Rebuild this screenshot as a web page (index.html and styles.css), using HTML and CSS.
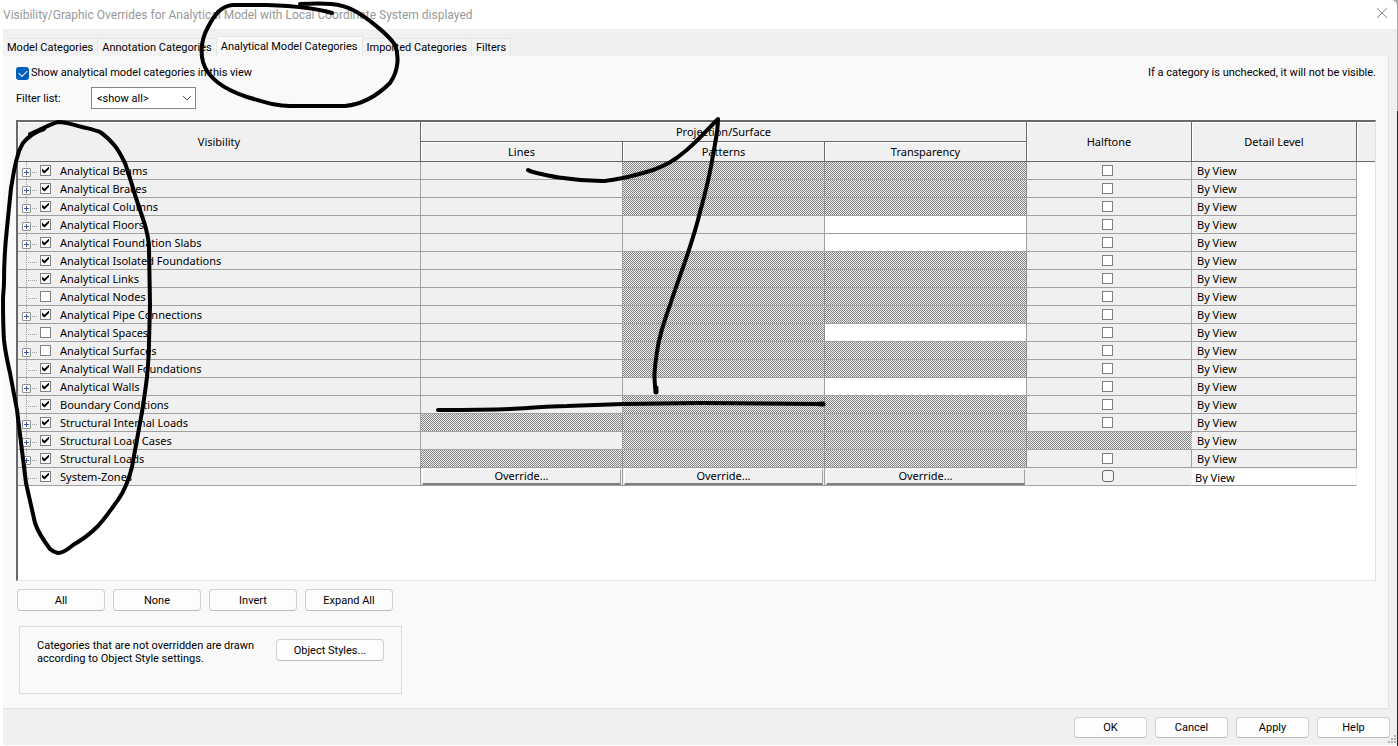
FILE: index.html
```
<!DOCTYPE html>
<html lang="en">
<head>
    <meta charset="UTF-8">
    <meta name="viewport" content="width=device-width, initial-scale=1.0">
    <title>Visibility/Graphic Overrides</title>
    <link rel="stylesheet" href="styles.css">
</head>
<body>
    <div class="dialog">
        <div class="titlebar">
            <span>Visibility/Graphic Overrides for Analytical Model with Local Coordinate System displayed</span>
            <button class="close" aria-label="Close">
                <svg width="12" height="12" viewBox="0 0 12 12"><path d="M1 1L11 11M11 1L1 11" stroke="#8a8a8a" fill="none"/></svg>
            </button>
        </div>

        <div class="tabs" role="tablist">
            <button class="tab" role="tab">Model Categories</button>
            <button class="tab" role="tab">Annotation Categories</button>
            <button class="tab active" role="tab" aria-selected="true">Analytical Model Categories</button>
            <button class="tab" role="tab">Imported Categories</button>
            <button class="tab" role="tab">Filters</button>
        </div>

        <div class="panel">
            <div class="show-row">
                <label class="show-all"><input type="checkbox" class="blue-check" checked>Show analytical model categories in this view</label>
                <span>If a category is unchecked, it will not be visible.</span>
            </div>
            <div class="filter-row">
                <label for="filter">Filter list:</label>
                <div class="select-box">
                    <select id="filter"><option>&lt;show all&gt;</option></select>
                    <svg width="10" height="6" viewBox="0 0 10 6"><path d="M1 1L5 5L9 1" stroke="#555" fill="none"/></svg>
                </div>
            </div>

            <div class="grid">
                <table>
                    <colgroup>
                        <col class="c-name"><col class="c-over"><col class="c-over"><col class="c-over"><col class="c-half"><col class="c-half"><col>
                    </colgroup>
                    <thead>
                        <tr>
                            <th rowspan="2">Visibility</th>
                            <th colspan="3">Projection/Surface</th>
                            <th rowspan="2">Halftone</th>
                            <th rowspan="2">Detail Level</th>
                            <th rowspan="2" class="last"></th>
                        </tr>
                        <tr><th>Lines</th><th>Patterns</th><th>Transparency</th></tr>
                    </thead>
                    <tbody>
                        <tr>
                            <td><div class="name"><span class="tree"><button class="plus" aria-label="Expand"></button></span><label><input type="checkbox" class="box" checked>Analytical Beams</label></div></td>
                            <td></td><td class="hatch"></td><td class="hatch"></td>
                            <td class="half"><input type="checkbox" class="box" aria-label="Halftone"></td><td class="level">By View</td>
                        </tr>
                        <tr>
                            <td><div class="name"><span class="tree"><button class="plus" aria-label="Expand"></button></span><label><input type="checkbox" class="box" checked>Analytical Braces</label></div></td>
                            <td></td><td class="hatch"></td><td class="hatch"></td>
                            <td class="half"><input type="checkbox" class="box" aria-label="Halftone"></td><td class="level">By View</td>
                        </tr>
                        <tr>
                            <td><div class="name"><span class="tree"><button class="plus" aria-label="Expand"></button></span><label><input type="checkbox" class="box" checked>Analytical Columns</label></div></td>
                            <td></td><td class="hatch"></td><td class="hatch"></td>
                            <td class="half"><input type="checkbox" class="box" aria-label="Halftone"></td><td class="level">By View</td>
                        </tr>
                        <tr>
                            <td><div class="name"><span class="tree"><button class="plus" aria-label="Expand"></button></span><label><input type="checkbox" class="box" checked>Analytical Floors</label></div></td>
                            <td></td><td></td><td class="edit"></td>
                            <td class="half"><input type="checkbox" class="box" aria-label="Halftone"></td><td class="level">By View</td>
                        </tr>
                        <tr>
                            <td><div class="name"><span class="tree"><button class="plus" aria-label="Expand"></button></span><label><input type="checkbox" class="box" checked>Analytical Foundation Slabs</label></div></td>
                            <td></td><td></td><td class="edit"></td>
                            <td class="half"><input type="checkbox" class="box" aria-label="Halftone"></td><td class="level">By View</td>
                        </tr>
                        <tr>
                            <td><div class="name"><span class="tree"></span><label><input type="checkbox" class="box" checked>Analytical Isolated Foundations</label></div></td>
                            <td></td><td class="hatch"></td><td class="hatch"></td>
                            <td class="half"><input type="checkbox" class="box" aria-label="Halftone"></td><td class="level">By View</td>
                        </tr>
                        <tr>
                            <td><div class="name"><span class="tree"></span><label><input type="checkbox" class="box" checked>Analytical Links</label></div></td>
                            <td></td><td class="hatch"></td><td class="hatch"></td>
                            <td class="half"><input type="checkbox" class="box" aria-label="Halftone"></td><td class="level">By View</td>
                        </tr>
                        <tr>
                            <td><div class="name"><span class="tree"></span><label><input type="checkbox" class="box">Analytical Nodes</label></div></td>
                            <td></td><td class="hatch"></td><td class="hatch"></td>
                            <td class="half"><input type="checkbox" class="box" aria-label="Halftone"></td><td class="level">By View</td>
                        </tr>
                        <tr>
                            <td><div class="name"><span class="tree"><button class="plus" aria-label="Expand"></button></span><label><input type="checkbox" class="box" checked>Analytical Pipe Connections</label></div></td>
                            <td></td><td class="hatch"></td><td class="hatch"></td>
                            <td class="half"><input type="checkbox" class="box" aria-label="Halftone"></td><td class="level">By View</td>
                        </tr>
                        <tr>
                            <td><div class="name"><span class="tree"></span><label><input type="checkbox" class="box">Analytical Spaces</label></div></td>
                            <td></td><td class="hatch"></td><td class="edit"></td>
                            <td class="half"><input type="checkbox" class="box" aria-label="Halftone"></td><td class="level">By View</td>
                        </tr>
                        <tr>
                            <td><div class="name"><span class="tree"><button class="plus" aria-label="Expand"></button></span><label><input type="checkbox" class="box">Analytical Surfaces</label></div></td>
                            <td></td><td class="hatch"></td><td class="hatch"></td>
                            <td class="half"><input type="checkbox" class="box" aria-label="Halftone"></td><td class="level">By View</td>
                        </tr>
                        <tr>
                            <td><div class="name"><span class="tree"></span><label><input type="checkbox" class="box" checked>Analytical Wall Foundations</label></div></td>
                            <td></td><td class="hatch"></td><td class="hatch"></td>
                            <td class="half"><input type="checkbox" class="box" aria-label="Halftone"></td><td class="level">By View</td>
                        </tr>
                        <tr>
                            <td><div class="name"><span class="tree"><button class="plus" aria-label="Expand"></button></span><label><input type="checkbox" class="box" checked>Analytical Walls</label></div></td>
                            <td></td><td></td><td class="edit"></td>
                            <td class="half"><input type="checkbox" class="box" aria-label="Halftone"></td><td class="level">By View</td>
                        </tr>
                        <tr>
                            <td><div class="name"><span class="tree"></span><label><input type="checkbox" class="box" checked>Boundary Conditions</label></div></td>
                            <td></td><td class="hatch"></td><td class="hatch"></td>
                            <td class="half"><input type="checkbox" class="box" aria-label="Halftone"></td><td class="level">By View</td>
                        </tr>
                        <tr>
                            <td><div class="name"><span class="tree"><button class="plus" aria-label="Expand"></button></span><label><input type="checkbox" class="box" checked>Structural Internal Loads</label></div></td>
                            <td class="hatch"></td><td class="hatch"></td><td class="hatch"></td>
                            <td class="half"><input type="checkbox" class="box" aria-label="Halftone"></td><td class="level">By View</td>
                        </tr>
                        <tr>
                            <td><div class="name"><span class="tree"><button class="plus" aria-label="Expand"></button></span><label><input type="checkbox" class="box" checked>Structural Load Cases</label></div></td>
                            <td></td><td class="hatch"></td><td class="hatch"></td>
                            <td class="hatch"></td><td class="level">By View</td>
                        </tr>
                        <tr>
                            <td><div class="name"><span class="tree"><button class="plus" aria-label="Expand"></button></span><label><input type="checkbox" class="box" checked>Structural Loads</label></div></td>
                            <td class="hatch"></td><td class="hatch"></td><td class="hatch"></td>
                            <td class="half"><input type="checkbox" class="box" aria-label="Halftone"></td><td class="level">By View</td>
                        </tr>
                        <tr class="current">
                            <td><div class="name"><span class="tree end"></span><label><input type="checkbox" class="box" checked>System-Zones</label></div></td>
                            <td><button class="override">Override...</button></td>
                            <td><button class="override">Override...</button></td>
                            <td><button class="override">Override...</button></td>
                            <td class="half"><input type="checkbox" class="box round" aria-label="Halftone"></td>
                            <td><select class="level-select" aria-label="Detail Level"><option>By View</option></select></td>
                        </tr>
                    </tbody>
                </table>
            </div>

            <div class="buttons">
                <button class="btn">All</button>
                <button class="btn">None</button>
                <button class="btn">Invert</button>
                <button class="btn">Expand All</button>
            </div>

            <div class="note">
                <p>Categories that are not overridden are drawn according to Object Style settings.</p>
                <button class="btn styles-btn">Object Styles...</button>
            </div>
        </div>

        <div class="footer">
            <button class="btn">OK</button>
            <button class="btn">Cancel</button>
            <button class="btn">Apply</button>
            <button class="btn">Help</button>
            <svg class="grip" width="10" height="10" viewBox="0 0 10 10" fill="#b0b0b0"><path d="M7 0h2v2h-2zM7 3h2v2h-2zM4 3h2v2h-2zM7 6h2v2h-2zM4 6h2v2h-2zM1 6h2v2h-2z"/></svg>
        </div>
    </div>

    <!-- pen marks drawn over the dialog -->
    <svg class="ink" width="1398" height="746" viewBox="0 0 1398 746">
        <path d="M332 13C316 8 295 6 267 5L233 5C221 6 215 14 208 27C202 38 200 50 203 62C207 76 220 88 247 97C265 102 275 106 290 106L345 106C365 104 380 93 390 83C399 70 399 55 395 45C388 34 365 16 353 10C340 3 325 3 300 4"/>
        <path d="M30 134C38 131 50 124 58 122C66 122 74 125 82 127C90 129 95 130 100 132C106 136 110 140 115 146C119 151 122 157 125 163C129 175 132 184 135 195L145 225C147 233 149 239 149 248L150 305L149 343C149 355 148 366 147 377C145 393 143 408 140 423L132 467C129 479 125 490 118 500C114 505 105 519 97 527C90 534 80 541 73 545C68 549 64 553 58 553C54 552 52 551 50 549C44 541 38 532 35 523L26 483L17 410L10 373C7 360 5 350 4 340C3 325 3 312 3 300C3 294 4 288 4 282C4 264 5 246 7 228L11 188C13 178 14 168 17 158C18 153 20 148 23 143C28 137 34 132 44 129"/>
        <path d="M528 170C531 172 534 172 537 173C546 175 554 177 563 178C576 180 589 181 602 181C609 181 616 179 623 178C633 176 643 173 653 170C664 166 674 161 683 153C694 145 705 132 718 119C718 132 715 143 713 155C710 175 705 194 700 212C692 246 678 280 670 305C663 324 659 337 657 352C655 365 653 378 656 392" />
        <path d="M438 410C462 410 486 410 510 409C530 408 548 406 567 406L623 404L700 403L823 404"/>
        <path class="thick" d="M656 388L656 392M820 404L823 404"/>
    </svg>
</body>
</html>
```
FILE: styles.css
```
* {
    box-sizing: border-box;
}

body {
    margin: 0;
    min-height: 100vh;
    display: flex;
    background: linear-gradient(#a8a8a8 0 111px, #222 111px);
    font: 11px/14px Roboto, Tahoma, sans-serif;
    color: #000;
}

button, select, input {
    font: inherit;
    color: inherit;
    margin: 0;
}

.dialog {
    flex: 1;
    display: flex;
    flex-direction: column;
    margin-right: 1px;
    border: solid #fff;
    border-width: 0 0 1px 3px;
    background: #f0f0f0;
    border-top-right-radius: 6px;
}

.titlebar {
    display: flex;
    justify-content: space-between;
    align-items: center;
    height: 29px;
    padding-right: 9px;
    background: #fff;
    border-top-right-radius: 6px;
    font-size: 12px;
    color: #999;
}

.close {
    display: flex;
    padding: 0;
    margin-bottom: 4px;
    border: none;
    background: none;
}

/* tabs */
.tabs {
    display: flex;
    align-items: flex-end;
    height: 27px;
}

.tab {
    height: 18px;
    padding: 1px 4px 0;
    border: 1px solid #e5e5e5;
    border-width: 1px 1px 0 0;
    background: #f3f3f3;
    white-space: nowrap;
}

.tab.active {
    height: 20px;
    padding-top: 0;
    background: #f9f9f9;
}

.panel {
    flex: 1;
    margin-right: 8px;
    padding: 10px 12px 0 13px;
    border: solid #e3e3e3;
    border-width: 0 1px 1px 0;
    background: #f9f9f9;
}

.show-row {
    display: flex;
    justify-content: space-between;
}

.show-all {
    display: flex;
    align-items: center;
    gap: 2px;
}

.blue-check {
    appearance: none;
    width: 13px;
    height: 13px;
    border-radius: 3px;
    background: #005fb8;
    display: grid;
    place-items: center;
}

.blue-check:checked::after {
    content: "";
    width: 7px;
    height: 4px;
    margin-bottom: 2px;
    border: solid #fff;
    border-width: 0 0 1px 1px;
    transform: rotate(-45deg);
}

.filter-row {
    display: flex;
    align-items: center;
    margin: 7px 0 11px;
}

.filter-row label {
    width: 75px;
    padding-top: 1px;
}

.select-box {
    display: grid;
    align-items: center;
    width: 105px;
}

.select-box > * {
    grid-area: 1 / 1;
}

.select-box select {
    appearance: none;
    height: 22px;
    padding: 1px 5px 0;
    border: 1px solid #868686;
    background: #fff;
}

.select-box svg {
    justify-self: end;
    margin-right: 4px;
    pointer-events: none;
}

/* category grid */
.grid {
    height: 461px;
    border: 2px solid #696969;
    border-color: #696969 #e3e3e3 #e3e3e3 #696969;
    border-right-width: 1px;
    border-bottom-width: 1px;
    background: #fff;
    font-family: "Noto Sans", Tahoma, sans-serif;
}

table {
    width: 100%;
    table-layout: fixed;
    border-collapse: separate;
    border-spacing: 0;
}

.c-name {
    width: 403px;
}

.c-over {
    width: 202px;
}

.c-half {
    width: 165px;
}

th {
    height: 20px;
    padding: 0;
    border: solid #696969;
    border-width: 0 1px 1px 0;
    background: #f0f0f0;
    box-shadow: inset 1px 1px #fff;
    font-weight: normal;
    line-height: 17px;
}

th.last {
    border-right: none;
}

td {
    height: 18px;
    padding: 0;
    border: solid #a0a0a0;
    border-width: 0 1px 1px 0;
    background: #f0f0f0;
    line-height: 17px;
}

.hatch {
    background: repeating-conic-gradient(#808080 0 25%, #f0f0f0 0 50%) 0 0 / 2px 2px;
    border-right: 1px dotted #a0a0a0;
}

.edit {
    background: #fff;
}

.name, .name label {
    display: flex;
    align-items: center;
}

.name {
    padding-left: 4px;
    height: 17px;
}

.name label {
    gap: 9px;
}

.name .box {
    margin-bottom: 1px;
}

/* dotted tree lines */
.tree {
    display: flex;
    align-items: flex-end;
    width: 18px;
    height: 17px;
    padding-bottom: 2px;
    background:
        repeating-linear-gradient(#a0a0a0 0 1px, transparent 1px 2px) 4px 0 / 1px 100% no-repeat,
        repeating-linear-gradient(90deg, #a0a0a0 0 1px, transparent 1px 2px) 4px 10px / 12px 1px no-repeat;
}

.tree.end {
    background-size: 1px 11px, 12px 1px;
}

.plus {
    width: 9px;
    height: 9px;
    padding: 0;
    border: 1px solid #919191;
    border-radius: 1px;
    background:
        linear-gradient(#3a5aa0, #3a5aa0) center / 5px 1px no-repeat,
        linear-gradient(#3a5aa0, #3a5aa0) center / 1px 5px no-repeat,
        #fcfcfc;
}

.box {
    appearance: none;
    width: 11px;
    height: 11px;
    border: 1px solid #808080;
    background: #fff;
    display: grid;
    place-items: center;
}

.box:checked::after {
    content: "";
    width: 7px;
    height: 7px;
    background: #000;
    clip-path: polygon(0 30%, 35% 60%, 100% 0, 100% 35%, 35% 100%, 0 70%);
}

.half .box {
    margin: 0 auto 1px 75px;
}

.box.round {
    width: 12px;
    height: 12px;
    border-radius: 3px;
    border-color: #666;
    background: #f5f5f5;
}

.level {
    padding-left: 5px;
}

.current td:nth-child(n+4) {
    border-right-color: #f0f0f0;
}

.override {
    display: block;
    width: 199px;
    height: 16px;
    margin: 0 auto;
    padding: 0 0 1px;
    border: 1px solid #fff;
    border-right-color: #a0a0a0;
    border-bottom: 2px solid #808080;
    background: #f0f0f0;
    line-height: 12px;
}

.level-select {
    appearance: none;
    display: block;
    width: 100%;
    height: 16px;
    padding: 0 3px 1px;
    border: none;
    background: #fff;
}

/* buttons */
.btn {
    width: 88px;
    height: 22px;
    padding: 1px 0 0;
    border: 1px solid #d0d0d0;
    border-bottom-color: #bcbcbc;
    border-radius: 4px;
    background: #fdfdfd;
}

.buttons {
    display: flex;
    gap: 8px;
    margin: 8px 0 15px 1px;
}

.note {
    display: flex;
    align-items: flex-start;
    justify-content: space-between;
    width: 383px;
    height: 68px;
    margin-left: 3px;
    padding: 12px 17px;
    border: 1px solid #dcdcdc;
}

.note p {
    width: 230px;
    margin: 0;
    line-height: 13px;
}

.btn.styles-btn {
    width: 108px;
}

.footer {
    display: flex;
    justify-content: flex-end;
    gap: 8px;
    position: relative;
    height: 36px;
    padding: 8px 7px 0 0;
}

.footer .btn {
    width: 73px;
    height: 21px;
}

.grip {
    position: absolute;
    right: 0;
    bottom: 0;
}

.ink {
    position: absolute;
    left: 0;
    top: 0;
    pointer-events: none;
    fill: none;
    stroke: #000;
    stroke-width: 4;
    stroke-linecap: round;
    stroke-linejoin: round;
}

.ink .thick {
    stroke-width: 5;
}
```
